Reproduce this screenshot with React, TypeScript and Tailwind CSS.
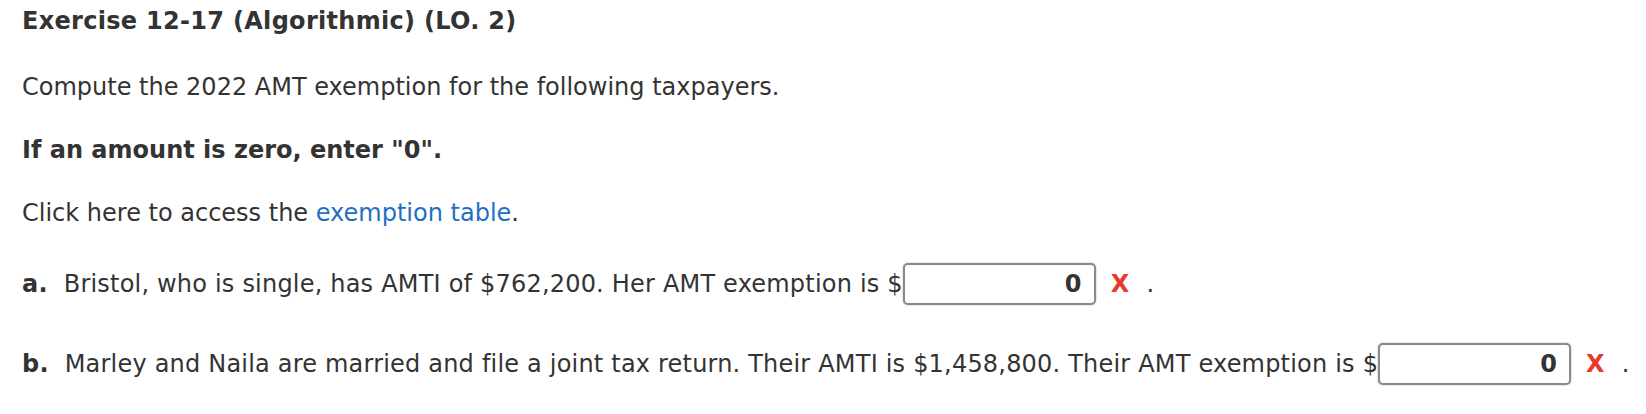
export default function App() {
  return (
    <div className="min-h-screen bg-white px-[22px] pt-[6px] font-['Verdana','DejaVu_Sans',sans-serif] text-[24px] leading-[30px] text-[#333]">
      <h2 className="text-[24px] font-bold leading-[30px] tracking-[0.3px] text-[#333]">
        Exercise 12-17 (Algorithmic) (LO. 2)
      </h2>

      <p className="mt-[36px]">Compute the 2022 AMT exemption for the following taxpayers.</p>

      <p className="mt-[33px] font-bold">If an amount is zero, enter "0".</p>

      <p className="mt-[33px]">
        Click here to access the <a className="text-[#1f6fc5] no-underline">exemption table</a>.
      </p>

      <div className="mt-[35px] flex items-center whitespace-nowrap tracking-[0.2px]">
        <span className="font-bold">a.</span>
        <span className="ml-[16px]">Bristol, who is single, has AMTI of $762,200. Her AMT exemption is $</span>
        <AnswerBox />
      </div>

      <div className="mt-[38px] flex items-center whitespace-nowrap tracking-[0.2px]">
        <span className="font-bold">b.</span>
        <span className="ml-[16px]">
          Marley and Naila are married and file a joint tax return. Their AMTI is $1,458,800. Their AMT exemption is $
        </span>
        <AnswerBox />
      </div>
    </div>
  );
}

function AnswerBox() {
  return (
    <>
      <div className="flex h-[42px] w-[193px] shrink-0 items-center justify-end rounded-[5px] border-2 border-[#8a8a8a] bg-white pr-[12px] font-bold shadow-[0_0_2px_rgba(0,0,0,0.35)]">
        0
      </div>
      <span className="ml-[15px] shrink-0 text-[24px] font-bold text-[#e8392c]">X</span>
      <span className="ml-[17px] shrink-0">.</span>
    </>
  );
}
